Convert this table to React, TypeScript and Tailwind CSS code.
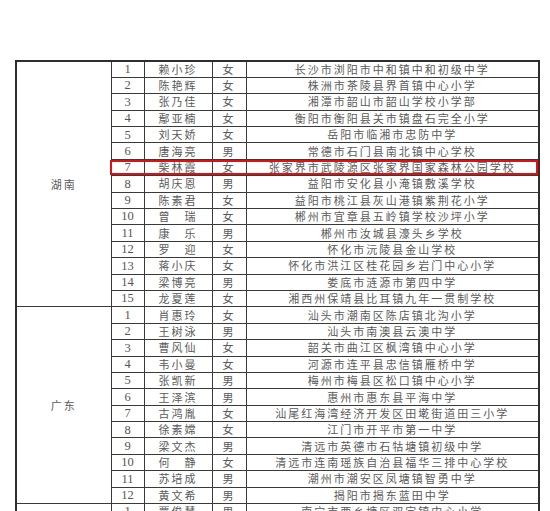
import React from "react";

type Row = [string, string, string, string];

const hunan: Row[] = [
  ["1", "赖小珍", "女", "长沙市浏阳市中和镇中和初级中学"],
  ["2", "陈艳辉", "女", "株洲市茶陵县界首镇中心小学"],
  ["3", "张乃佳", "女", "湘潭市韶山市韶山学校小学部"],
  ["4", "鄢亚楠", "女", "衡阳市衡阳县关市镇盘石完全小学"],
  ["5", "刘天娇", "女", "岳阳市临湘市忠防中学"],
  ["6", "唐海亮", "男", "常德市石门县南北镇中心学校"],
  ["7", "柴林霞", "女", "张家界市武陵源区张家界国家森林公园学校"],
  ["8", "胡庆恩", "男", "益阳市安化县小淹镇敷溪学校"],
  ["9", "陈素君", "女", "益阳市桃江县灰山港镇紫荆花小学"],
  ["10", "曾　瑞", "女", "郴州市宜章县五岭镇学校沙坪小学"],
  ["11", "康　乐", "男", "郴州市汝城县濠头乡学校"],
  ["12", "罗　迎", "女", "怀化市沅陵县金山学校"],
  ["13", "蒋小庆", "女", "怀化市洪江区桂花园乡岩门中心小学"],
  ["14", "梁博亮", "男", "娄底市涟源市第四中学"],
  ["15", "龙夏莲", "女", "湘西州保靖县比耳镇九年一贯制学校"],
];

const guangdong: Row[] = [
  ["1", "肖惠玲", "女", "汕头市潮南区陈店镇北沟小学"],
  ["2", "王树泳", "男", "汕头市南澳县云澳中学"],
  ["3", "曹风仙", "女", "韶关市曲江区枫湾镇中心小学"],
  ["4", "韦小曼", "女", "河源市连平县忠信镇雁桥中学"],
  ["5", "张凯新", "男", "梅州市梅县区松口镇中心小学"],
  ["6", "王泽滨", "男", "惠州市惠东县平海中学"],
  ["7", "古鸿胤", "女", "汕尾红海湾经济开发区田墘街道田三小学"],
  ["8", "徐素嫦", "女", "江门市开平市第一中学"],
  ["9", "梁文杰", "男", "清远市英德市石牯塘镇初级中学"],
  ["10", "何　静", "女", "清远市连南瑶族自治县福华三排中心学校"],
  ["11", "苏培成", "男", "潮州市潮安区凤塘镇智勇中学"],
  ["12", "黄文希", "男", "揭阳市揭东蓝田中学"],
];

const guangxi: Row[] = [
  ["1", "覃俊慧", "男", "南宁市西乡塘区双定镇中心小学"],
  ["2", "黄丽梅", "女", "柳州市柳江区百朋镇中心小学"],
];

const cell = "border border-[#3a3a3a] p-0 text-center align-middle leading-none";
const cjk = "font-['Noto_Sans_CJK_SC',sans-serif] text-[11px] tracking-[2px] text-[#5a5a5a]";
const num = "font-['Liberation_Serif',serif] text-[12.5px] text-[#555]";

function Group({ name, rows }: { name: string; rows: Row[] }) {
  return (
    <>
      {rows.map((r, i) => (
        <tr key={i} className="h-[16.4px]">
          {i === 0 && (
            <td rowSpan={rows.length} className={`${cell} ${cjk}`}>
              {name}
            </td>
          )}
          <td className={`${cell} ${num}`}>{r[0]}</td>
          <td className={`${cell} ${cjk} whitespace-nowrap`}>{r[1]}</td>
          <td className={`${cell} ${cjk}`}>{r[2]}</td>
          <td className={`${cell} ${cjk} whitespace-nowrap`}>{r[3]}</td>
        </tr>
      ))}
    </>
  );
}

export default function App() {
  return (
    <div className="w-[550px] h-[511px] overflow-hidden bg-white">
      <div className="relative ml-[15px] mt-[60px] w-[523px]">
        <table className="w-[523px] table-fixed border-collapse border-2 border-[#2e2e2e]">
          <colgroup>
            <col className="w-[95px]" />
            <col className="w-[33px]" />
            <col className="w-[68px]" />
            <col className="w-[34px]" />
            <col className="w-[293px]" />
          </colgroup>
          <tbody>
            <Group name="湖南" rows={hunan} />
            <Group name="广东" rows={guangdong} />
            <Group name="广西" rows={guangxi} />
          </tbody>
        </table>
        <div className="pointer-events-none absolute left-[95px] right-0 top-[99.5px] h-[15px] border-2 border-[#e01010]" />
      </div>
    </div>
  );
}
